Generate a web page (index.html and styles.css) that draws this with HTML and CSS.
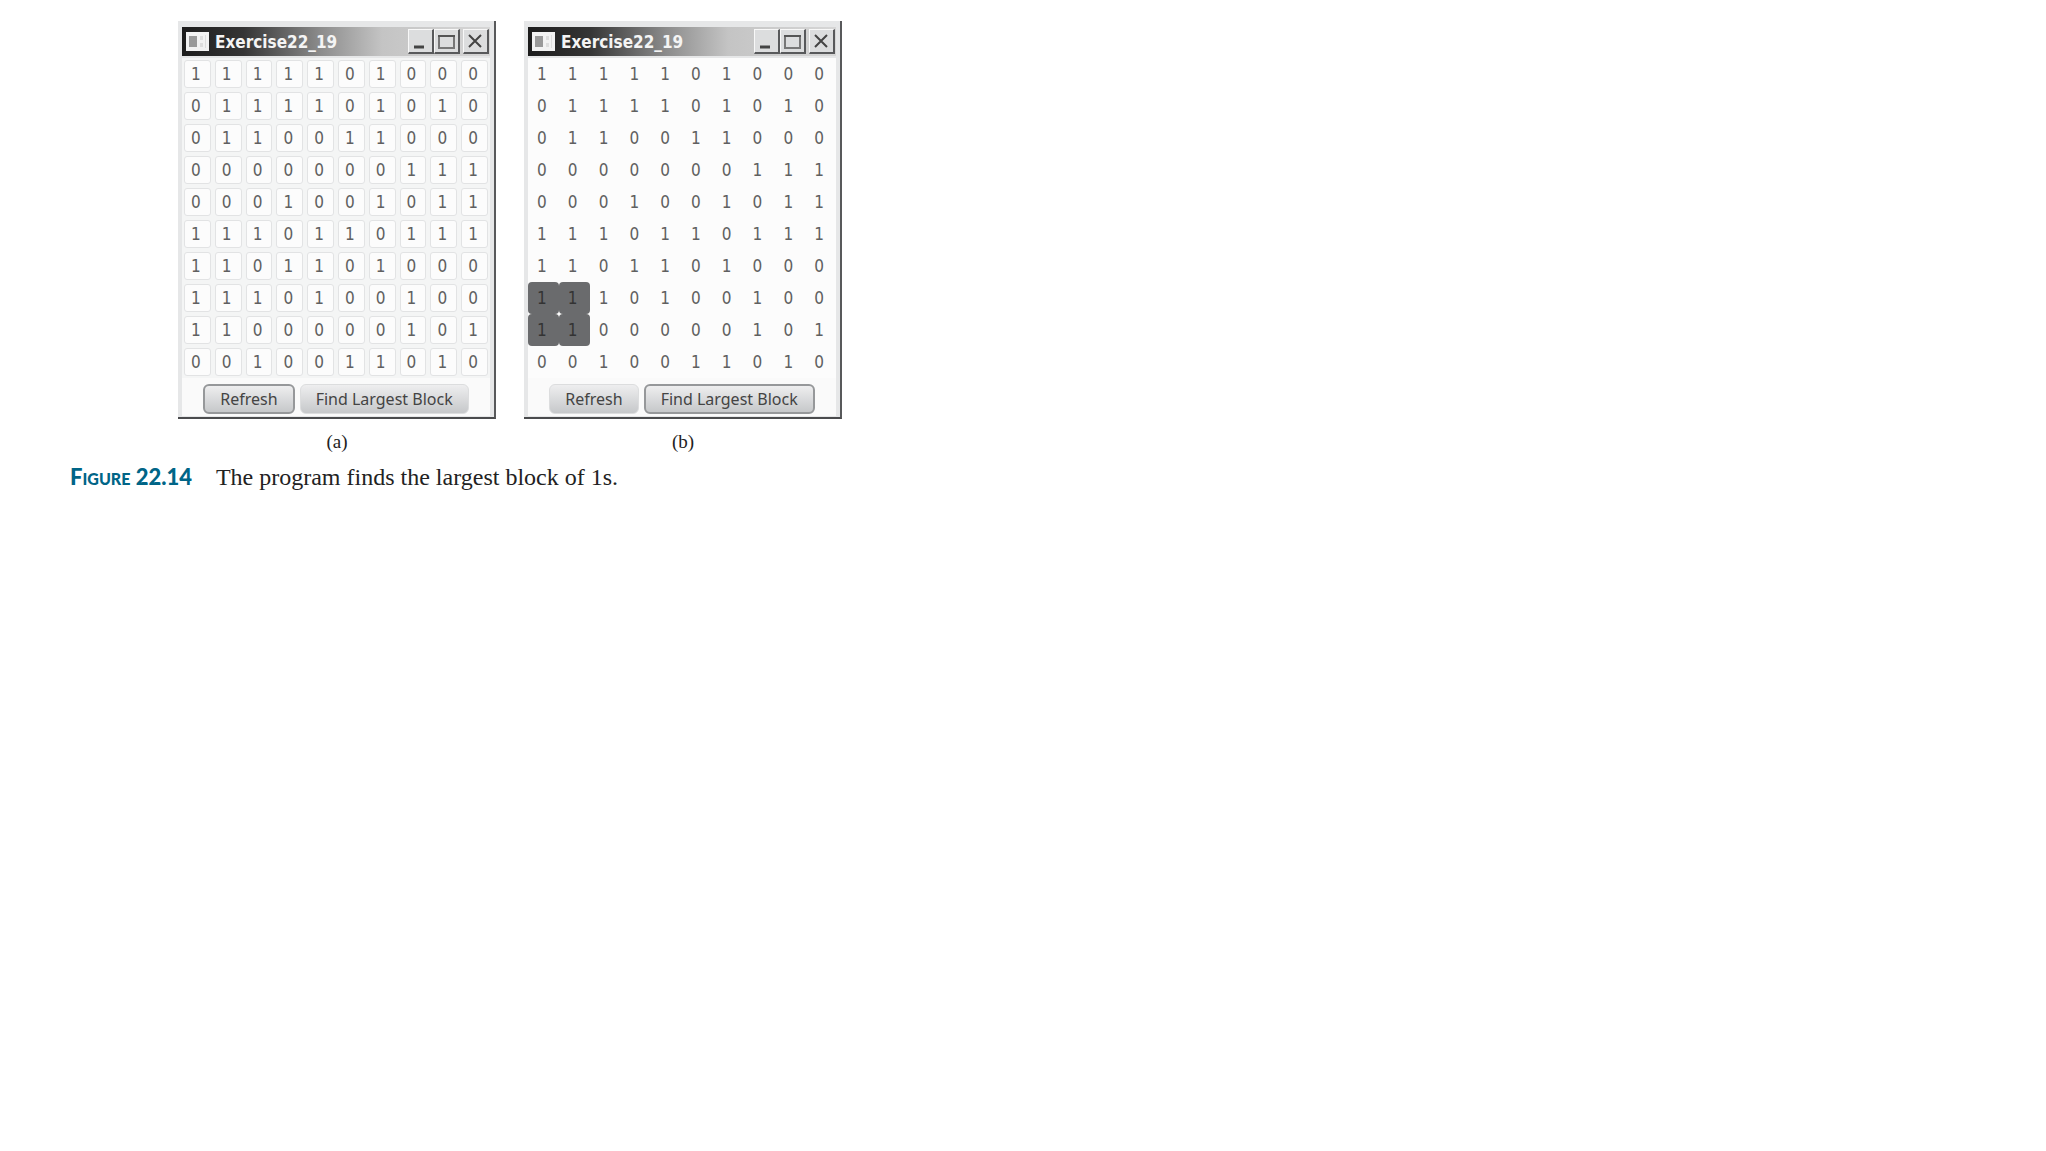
FILE: index.html
```html
<!DOCTYPE html>
<html lang="en">
<head>
<meta charset="utf-8">
<title>Figure 22.14</title>
<link rel="stylesheet" href="styles.css">
</head>
<body>
<figure class="figure">
  <div class="panels">
    <section class="panel">
      <div class="window">
        <header class="titlebar">
          <svg class="app-icon" viewBox="0 0 23 19" aria-hidden="true"><path fill="#f2f2f2" d="M0 0h23v19H0z"/><path fill="#999" d="M3 4h8v11H3z"/><path fill="#ddd" d="M14 4h3v4h-3zM14 11h3v4h-3zM19 3h1v13h-1z"/></svg>
          <h2 class="title">Exercise22_19</h2>
          <div class="controls">
            <button class="control" type="button" aria-label="Minimize"><svg viewBox="0 0 20 20"><path d="M4 16h10" stroke-width="3"/></svg></button>
            <button class="control" type="button" aria-label="Maximize"><svg viewBox="0 0 20 20"><path d="M3 5h15v12H3z" stroke="#777"/><path d="M2 5h17" stroke="#555"/></svg></button>
            <button class="control control-close" type="button" aria-label="Close"><svg viewBox="0 0 20 20"><path d="M4 4l12 12M16 4L4 16"/></svg></button>
          </div>
        </header>
        <table class="matrix"><tbody data-name="a"></tbody></table>
        <div class="actions">
          <button class="action focused" type="button">Refresh</button>
          <button class="action" type="button">Find Largest Block</button>
        </div>
      </div>
      <p class="label">(a)</p>
    </section>
    <section class="panel">
      <div class="window">
        <header class="titlebar">
          <svg class="app-icon" viewBox="0 0 23 19" aria-hidden="true"><path fill="#f2f2f2" d="M0 0h23v19H0z"/><path fill="#999" d="M3 4h8v11H3z"/><path fill="#ddd" d="M14 4h3v4h-3zM14 11h3v4h-3zM19 3h1v13h-1z"/></svg>
          <h2 class="title">Exercise22_19</h2>
          <div class="controls">
            <button class="control" type="button" aria-label="Minimize"><svg viewBox="0 0 20 20"><path d="M4 16h10" stroke-width="3"/></svg></button>
            <button class="control" type="button" aria-label="Maximize"><svg viewBox="0 0 20 20"><path d="M3 5h15v12H3z" stroke="#777"/><path d="M2 5h17" stroke="#555"/></svg></button>
            <button class="control control-close" type="button" aria-label="Close"><svg viewBox="0 0 20 20"><path d="M4 4l12 12M16 4L4 16"/></svg></button>
          </div>
        </header>
        <table class="matrix plain"><tbody data-name="b" data-block="7,0,2"></tbody></table>
        <div class="actions">
          <button class="action" type="button">Refresh</button>
          <button class="action focused" type="button">Find Largest Block</button>
        </div>
      </div>
      <p class="label">(b)</p>
    </section>
  </div>
  <figcaption class="caption"><strong class="number">F<span class="small">IGURE</span> 22.14</strong><span>The program finds the largest block of 1s.</span></figcaption>
</figure>
<script src="matrix.js"></script>
</body>
</html>
```
FILE: styles.css
```css
* { box-sizing: border-box; }
body { margin: 0; background: #fff; color: #222; font-family: "Liberation Serif", serif; }
.figure { margin: 0; padding: 21px 24px 24px 70px; }
.panels { display: flex; flex-wrap: wrap; gap: 28px; padding-left: 108px; }
.panel { width: 318px; }
.window {
  padding: 6px 4px 1px;
  background: #e6e7e8;
  border-right: 2px solid #58595b;
  border-bottom: 2px solid #4a4b4d;
}
.titlebar {
  display: flex;
  align-items: center;
  height: 29px;
  padding: 0 1px 0 4px;
  background: linear-gradient(90deg, #1c1c1c 0%, #353535 20%, #8c8c8c 45%, #c4c4c4 65%, #d6d6d6 100%);
}
.app-icon { width: 23px; height: 19px; }
.title {
  margin: 0 0 0 6px;
  flex: 1;
  color: #f4f4f4;
  font: bold 17px/24px "DejaVu Sans Condensed", "DejaVu Sans", sans-serif;
}
.controls { display: flex; align-items: center; }
.control {
  width: 26px;
  height: 25px;
  padding: 1px;
  background: #dcddde;
  border: solid;
  border-width: 1px 2px 2px 1px;
  border-color: #f8f8f8 #58595b #58595b #f8f8f8;
}
.control-close { margin-left: 3px; }
.control svg { display: block; width: 20px; height: 20px; fill: none; stroke: #444; stroke-width: 2; }
.matrix {
  width: 100%;
  margin-top: 2px;
  table-layout: fixed;
  border-collapse: collapse;
  background: #f4f5f5;
}
.matrix td { height: 32px; padding: 2px; }
.cell {
  display: block;
  width: 100%;
  height: 28px;
  padding: 0 3px 0 0;
  background: #fcfcfc;
  border: 1px solid #e2e3e4;
  border-radius: 3px;
  color: #606060;
  text-align: center;
  font: 17px/24px "DejaVu Sans Condensed", "DejaVu Sans", sans-serif;
}
.plain { background: #fcfcfc; }
.plain td { padding: 0; }
.plain .cell { height: 32px; border-color: transparent; }
.plain .marked { background: #6a6b6d; border: 0; border-radius: 4px; color: #333; }
.actions {
  display: flex;
  justify-content: center;
  gap: 5px;
  height: 38px;
  padding: 6px 0 2px;
  background: #fafafa;
}
.action {
  padding: 0 15px;
  background: linear-gradient(#eeeeef, #c6c8ca);
  border: 1px solid #dcddde;
  border-radius: 6px;
  color: #444;
  font: 16px/24px "Noto Sans", sans-serif;
}
.focused { border: 2px solid #96989a; }
.label { margin: 12px 0 0; text-align: center; font-size: 19px; line-height: 22px; }
.caption { display: flex; align-items: baseline; gap: 24px; margin-top: 10px; font-size: 24px; line-height: 28px; }
.number { color: #006587; font: 900 22px/28px Lato, sans-serif; }
.small { font-size: 16px; }
```
FILE: matrix.js
```js
const rows = [
  "1111101000",
  "0111101010",
  "0110011000",
  "0000000111",
  "0001001011",
  "1110110111",
  "1101101000",
  "1110100100",
  "1100000101",
  "0010011010"
];

document.querySelectorAll("tbody").forEach(body => {
  const [top, left, size] = (body.dataset.block || "0,0,0").split(",").map(Number);
  rows.forEach((row, r) => {
    const line = body.insertRow();
    [...row].forEach((value, c) => {
      const input = document.createElement("input");
      input.type = "text";
      input.className = "cell";
      input.value = value;
      input.setAttribute("aria-label", `Row ${r + 1}, column ${c + 1}`);
      if (r >= top && r < top + size && c >= left && c < left + size) {
        input.classList.add("marked");
      }
      line.insertCell().append(input);
    });
  });
});
```
